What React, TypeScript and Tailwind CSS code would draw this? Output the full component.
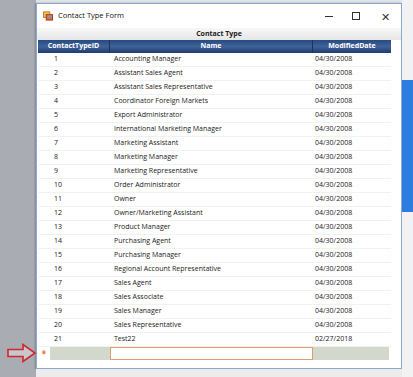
import React from "react";

const ROWS: [number, string, string][] = [
  [1, "Accounting Manager", "04/30/2008"],
  [2, "Assistant Sales Agent", "04/30/2008"],
  [3, "Assistant Sales Representative", "04/30/2008"],
  [4, "Coordinator Foreign Markets", "04/30/2008"],
  [5, "Export Administrator", "04/30/2008"],
  [6, "International Marketing Manager", "04/30/2008"],
  [7, "Marketing Assistant", "04/30/2008"],
  [8, "Marketing Manager", "04/30/2008"],
  [9, "Marketing Representative", "04/30/2008"],
  [10, "Order Administrator", "04/30/2008"],
  [11, "Owner", "04/30/2008"],
  [12, "Owner/Marketing Assistant", "04/30/2008"],
  [13, "Product Manager", "04/30/2008"],
  [14, "Purchasing Agent", "04/30/2008"],
  [15, "Purchasing Manager", "04/30/2008"],
  [16, "Regional Account Representative", "04/30/2008"],
  [17, "Sales Agent", "04/30/2008"],
  [18, "Sales Associate", "04/30/2008"],
  [19, "Sales Manager", "04/30/2008"],
  [20, "Sales Representative", "04/30/2008"],
  [21, "Test22", "02/27/2018"],
];

function FormIcon() {
  return (
    <svg width="10" height="10" viewBox="0 0 11 10">
      <rect x="0.5" y="0.5" width="7" height="6" fill="#f3c34a" stroke="#b07a1a" />
      <rect x="3.5" y="3.5" width="7" height="6" fill="#e86a3a" stroke="#9a3a1a" />
      <rect x="4.5" y="4.5" width="5" height="2" fill="#6aa0e0" />
    </svg>
  );
}

function Arrow() {
  return (
    <svg width="30" height="20" viewBox="0 0 30 20">
      <path
        d="M1 6.5 H16 V1.5 L28 10 L16 18.5 V13.5 H1 Z"
        fill="#c6c8ce"
        stroke="#d2262c"
        strokeWidth="1.6"
        strokeLinejoin="miter"
      />
    </svg>
  );
}

export default function App() {
  return (
    <div
      className="relative flex h-[377px] w-[413px] overflow-hidden bg-[#eeeeee] text-[#222]"
      style={{ fontFamily: '"Open Sans", "Noto Sans", sans-serif' }}
    >
      {/* left desktop strip */}
      <div className="h-full w-[36px] shrink-0 bg-[#a9acb3]" />

      {/* window column */}
      <div className="flex w-[366px] shrink-0 flex-col">
        <div className="h-[3px] bg-[#e2e2e2]" />
        <div className="flex h-[366px] flex-col border border-[#8aa8d0] bg-white shadow-[-1px_0_2px_rgba(0,0,0,0.25)]">
          {/* title bar */}
          <div className="relative flex h-[24px] shrink-0 items-center pl-[6px]">
            <FormIcon />
            <span className="ml-[5px] text-[7.5px] text-[#111]">Contact Type Form</span>
            <div className="absolute right-0 top-0 flex h-full items-center">
              <span className="flex w-[27px] justify-center">
                <span className="mt-[1px] block h-px w-[8px] bg-[#333]" />
              </span>
              <span className="flex w-[27px] justify-center">
                <span className="block h-[8px] w-[8px] border border-[#333]" />
              </span>
              <span className="flex w-[32px] justify-center text-[11px] leading-none text-[#333]">
                ✕
              </span>
            </div>
          </div>

          {/* group title */}
          <div className="flex h-[12px] shrink-0 items-center justify-center bg-gradient-to-b from-[#f7f7f7] to-[#e6e6e6] text-[7px] font-bold text-[#222]">
            Contact Type
          </div>

          {/* grid */}
          <div className="ml-[1px] mr-[10px] flex flex-col text-[7px]">
            <div className="flex h-[13px] items-center bg-gradient-to-b from-[#274a80] via-[#3f6298] to-[#1f3c6e] font-bold text-white">
              <div className="flex h-full w-[72px] items-center justify-center border-r border-[#1c335a]">
                ContactTypeID
              </div>
              <div className="flex h-full w-[203px] items-center justify-center border-r border-[#1c335a]">
                Name
              </div>
              <div className="flex h-full flex-1 items-center justify-center">ModifiedDate</div>
            </div>

            {ROWS.map(([id, name, date]) => (
              <div key={id} className="flex h-[14px] items-center border-b border-[#f1f1f1] text-[#1a1a1a]">
                <div className="w-[12px]" />
                <div className="w-[60px] pl-[4px]">{id}</div>
                <div className="w-[203px] pl-[4px]">{name}</div>
                <div className="flex-1 pl-[2px]">{date}</div>
              </div>
            ))}

            <div className="flex h-[13px] items-stretch">
              <div className="flex w-[12px] items-center justify-center text-[8px] font-bold leading-none text-[#e8701e]">
                *
              </div>
              <div className="w-[60px] bg-[#d3d8cc]" />
              <div className="w-[203px] border border-[#e39a72] bg-white" />
              <div className="mr-[2px] flex-1 bg-[#d3d8cc]" />
            </div>
          </div>
        </div>
        <div className="flex-1 bg-[#ececec]" />
      </div>

      {/* right desktop strip */}
      <div className="flex flex-1 flex-col bg-[#f2f2f2]">
        <div className="h-[80px]" />
        <div className="h-[132px] bg-[#2d7ce0]" />
      </div>

      {/* annotation arrow */}
      <div className="absolute left-[7px] top-[343px]">
        <Arrow />
      </div>
    </div>
  );
}
